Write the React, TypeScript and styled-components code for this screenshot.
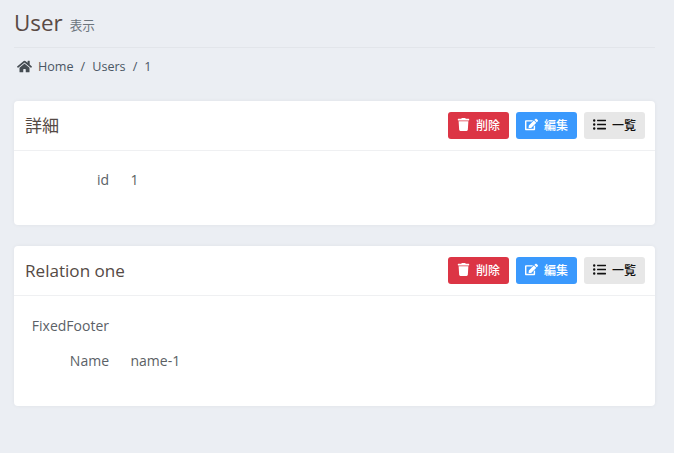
import { createGlobalStyle } from "styled-components";
import styled from "styled-components";
import { FaEdit, FaHome, FaListUl, FaTrash } from "react-icons/fa";

const cjk = `"Open Sans", "Noto Sans CJK JP", sans-serif`;

const Global = createGlobalStyle`
  html, body {
    margin: 0;
    background: #ebeef3;
  }
  body {
    font-family: ${cjk};
    font-size: 14px;
    color: #4f4f4f;
  }
`;

const Page = styled.div`
  padding: 0 19px 47px 14px;
`;

const Header = styled.header`
  height: 48px;
  border-bottom: 1px solid #e2e5ea;
  display: flex;
  align-items: flex-end;
  padding-bottom: 9px;
  box-sizing: border-box;
  gap: 7px;
`;

const Title = styled.h1`
  margin: 0;
  font-size: 22.4px;
  line-height: 30px;
  font-weight: 400;
  color: #5a4a45;
`;

const Sub = styled.small`
  font-size: 12.6px;
  line-height: 24px;
  color: #6c757d;
`;

const Crumbs = styled.nav`
  display: flex;
  align-items: center;
  height: 37px;
  padding-left: 3px;
  font-size: 12.6px;
  color: #4a5663;
  svg {
    font-size: 15px;
    color: #454c52;
    margin-right: 6px;
  }
`;

const Sep = styled.span`
  margin: 0 7px;
`;

const Cards = styled.div`
  margin-top: 16px;
  display: flex;
  flex-direction: column;
  gap: 21px;
`;

const Card = styled.section`
  background: #fff;
  border-radius: 4px;
  box-shadow: 0 0 4px rgba(0, 0, 0, 0.05);
`;

const CardHead = styled.div`
  height: 50px;
  box-sizing: border-box;
  border-bottom: 1px solid #eff0f2;
  padding: 0 10px 0 11px;
  display: flex;
  align-items: center;
  justify-content: space-between;
`;

const CardTitle = styled.h2`
  margin: 0;
  font-size: 17.1px;
  line-height: 24px;
  font-weight: 400;
  color: #554a45;
`;

const Actions = styled.div`
  display: flex;
  gap: 7px;
`;

const Btn = styled.a<{ $bg: string; $fg: string }>`
  width: 61px;
  height: 27px;
  box-sizing: border-box;
  padding-bottom: 2px;
  border-radius: 3px;
  background: ${(p) => p.$bg};
  color: ${(p) => p.$fg};
  font-size: 12px;
  font-weight: 500;
  display: flex;
  align-items: center;
  justify-content: center;
  gap: 6px;
  svg {
    font-size: 13px;
  }
`;

const CardBody = styled.div<{ $height: number; $top: number }>`
  height: ${(p) => p.$height}px;
  box-sizing: border-box;
  padding-top: ${(p) => p.$top}px;
`;

const Row = styled.div`
  display: grid;
  grid-template-columns: 95px auto;
  column-gap: 21.5px;
  height: 20px;
  line-height: 20px;
  font-size: 14px;
  margin-bottom: 15px;
`;

const Label = styled.div`
  text-align: right;
  color: #5b6167;
`;

const Value = styled.div`
  color: #5b5f63;
`;

function Buttons() {
  return (
    <Actions>
      <Btn $bg="#dc3545" $fg="#fff">
        <FaTrash />
        削除
      </Btn>
      <Btn $bg="#3a99fd" $fg="#fff">
        <FaEdit />
        編集
      </Btn>
      <Btn $bg="#e7e7e7" $fg="#111">
        <FaListUl />
        一覧
      </Btn>
    </Actions>
  );
}

export default function App() {
  return (
    <Page>
      <Global />
      <Header>
        <Title>User</Title>
        <Sub>表示</Sub>
      </Header>
      <Crumbs>
        <FaHome />
        <span>Home</span>
        <Sep>/</Sep>
        <span>Users</span>
        <Sep>/</Sep>
        <span>1</span>
      </Crumbs>
      <Cards>
        <Card>
          <CardHead>
            <CardTitle>詳細</CardTitle>
            <Buttons />
          </CardHead>
          <CardBody $height={74} $top={19}>
            <Row>
              <Label>id</Label>
              <Value>1</Value>
            </Row>
          </CardBody>
        </Card>
        <Card>
          <CardHead>
            <CardTitle>Relation one</CardTitle>
            <Buttons />
          </CardHead>
          <CardBody $height={110} $top={20}>
            <Row>
              <Label>FixedFooter</Label>
              <Value />
            </Row>
            <Row>
              <Label>Name</Label>
              <Value>name-1</Value>
            </Row>
          </CardBody>
        </Card>
      </Cards>
    </Page>
  );
}
